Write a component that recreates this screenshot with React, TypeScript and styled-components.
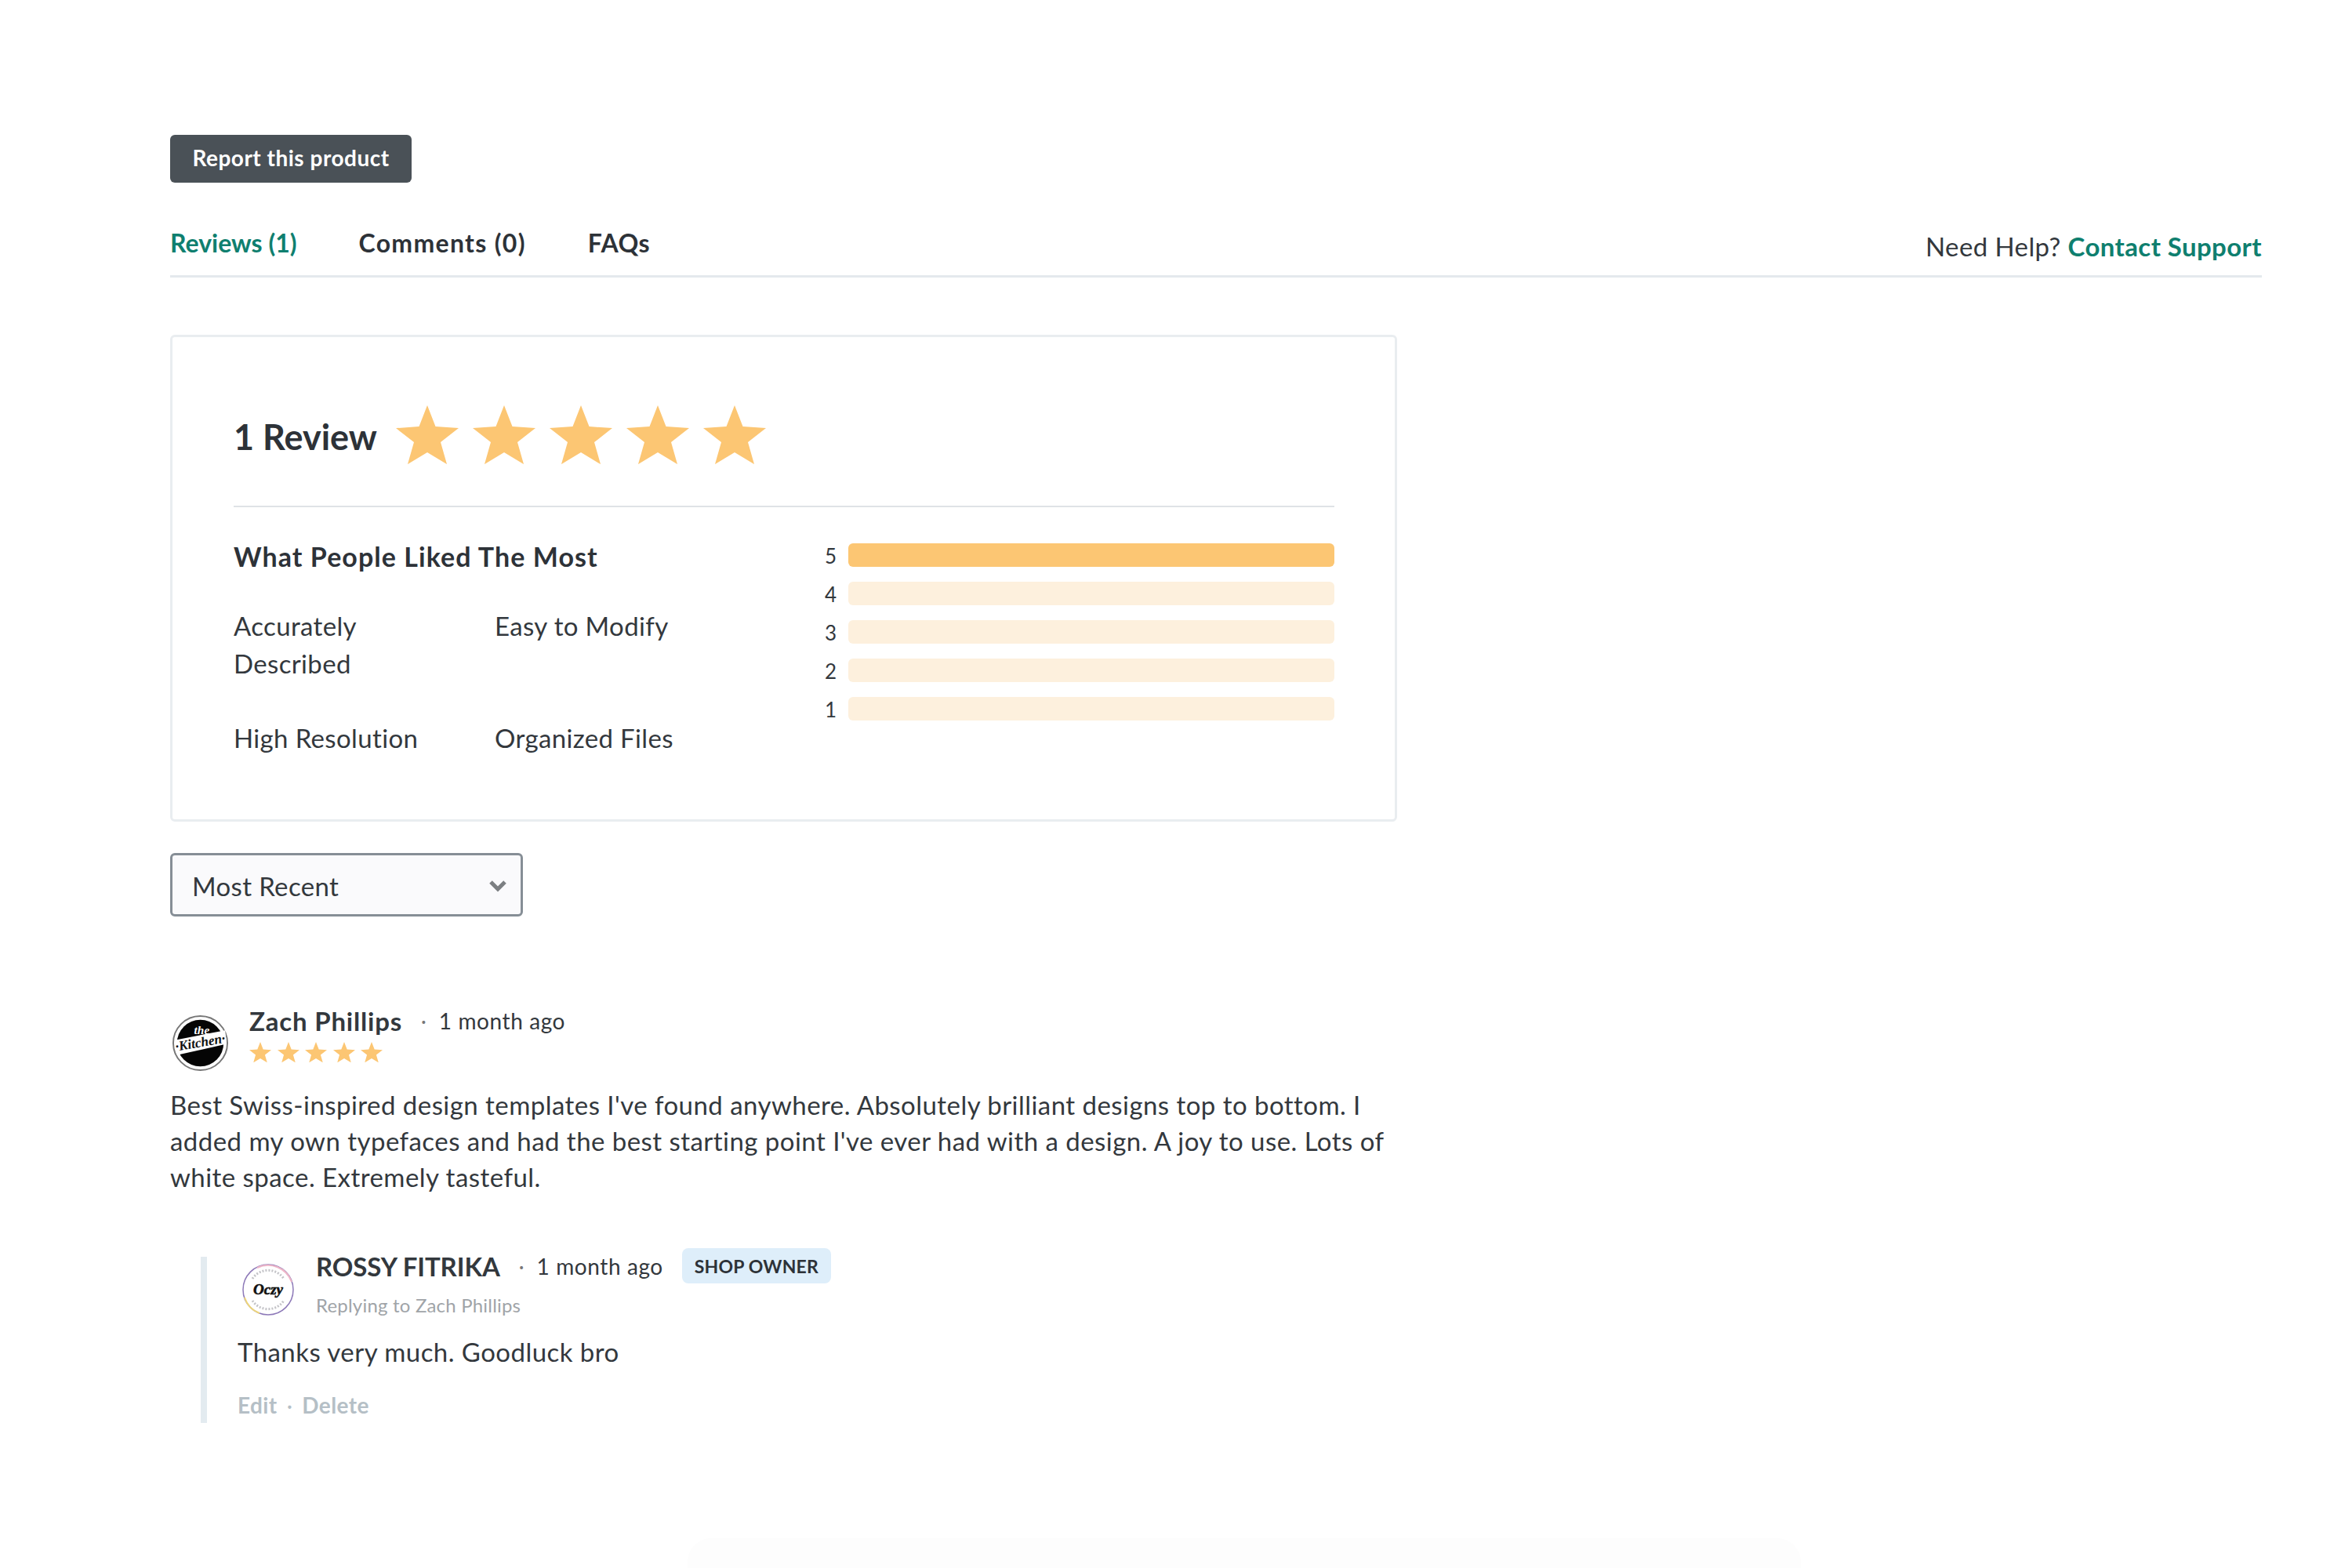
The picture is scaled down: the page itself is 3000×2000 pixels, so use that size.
import React from 'react';
import styled, { createGlobalStyle } from 'styled-components';

const GlobalStyle = createGlobalStyle`
  html, body {
    margin: 0;
    background: #fff;
    height: 2000px;
    overflow: hidden;
  }

  * {
    box-sizing: border-box;
  }

  body {
    font-family: Lato, "Noto Sans", sans-serif;
    color: #33383d;
  }
`;

const Page = styled.div`
  width: 3000px;
  height: 2000px;
  padding: 172px 115px 0 217px;
  overflow: hidden;
`;

const ReportButton = styled.button`
  display: block;
  width: 308px;
  height: 61px;
  padding: 0 0 3px;
  border: 0;
  border-radius: 6px;
  background: #4a5157;
  color: #fff;
  font: 700 28px Lato, sans-serif;
  letter-spacing: 0.5px;
`;

const TabBar = styled.div`
  height: 121px;
  padding-top: 55px;
  border-bottom: 3px solid #e4e9ed;
  display: flex;
  justify-content: space-between;
`;

const Tabs = styled.div`
  display: flex;
  gap: 79px;
`;

const Tab = styled.span<{ $active?: boolean; $tracking?: number }>`
  font-size: 32px;
  line-height: 44px;
  font-weight: 700;
  letter-spacing: ${(p) => p.$tracking ?? 0}px;
  color: ${(p) => (p.$active ? '#0f7f6f' : '#2d3238')};
`;

const Help = styled.div`
  font-size: 33px;
  line-height: 44px;
  padding-top: 4px;
  letter-spacing: 0.4px;
`;

const HelpLink = styled.a`
  color: #0f7f6f;
  font-weight: 700;
`;

const SummaryCard = styled.section`
  width: 1565px;
  height: 621px;
  margin-top: 73px;
  padding: 0 77px 0 78px;
  border: 3px solid #e9edf0;
  border-radius: 6px;
`;

const SummaryHead = styled.div`
  height: 217px;
  border-bottom: 2px solid #dfe3e6;
  padding-top: 87px;
  display: flex;
  gap: 24px;
`;

const ReviewCount = styled.h2`
  margin: 12px 0 0;
  font-size: 45px;
  line-height: 56px;
  font-weight: 700;
  color: #2d3238;
`;

const StarRow = styled.div<{ $gap: number }>`
  display: flex;
  gap: ${(p) => p.$gap}px;
`;

const StarIcon = styled.svg<{ $size: number }>`
  display: block;
  width: ${(p) => p.$size}px;
  height: ${(p) => p.$size * 0.94}px;
  fill: #fcc673;
`;

const SummaryBody = styled.div`
  display: flex;
  justify-content: space-between;
`;

const Liked = styled.div`
  padding-top: 40px;
`;

const LikedTitle = styled.h3`
  margin: 0;
  font-size: 34px;
  line-height: 46px;
  font-weight: 700;
  letter-spacing: 1.05px;
  color: #2d3238;
`;

const LikedGrid = styled.div`
  display: grid;
  grid-template-columns: 333px 300px;
  row-gap: 47px;
  margin-top: 41px;
`;

const LikedItem = styled.div`
  font-size: 33px;
  line-height: 48px;
  letter-spacing: 0.35px;
  white-space: pre;
`;

const Bars = styled.div`
  width: 650px;
  padding-top: 46px;
  display: flex;
  flex-direction: column;
  gap: 19px;
`;

const BarRow = styled.div`
  display: flex;
  align-items: center;
  gap: 16px;
  height: 30px;
`;

const BarLabel = styled.span`
  width: 14px;
  font-size: 26px;
  line-height: 30px;
  padding-top: 2px;
`;

const BarTrack = styled.div<{ $filled?: boolean }>`
  flex: 1;
  height: 30px;
  border-radius: 6px;
  background: ${(p) => (p.$filled ? '#fcc673' : '#fdf0dd')};
`;

const SortSelect = styled.div`
  width: 450px;
  height: 81px;
  margin-top: 40px;
  padding: 2px 18px 0 25px;
  display: flex;
  align-items: center;
  justify-content: space-between;
  background: #fafafc;
  border: 3px solid #868e96;
  border-radius: 6px;
  font-size: 33px;
  letter-spacing: 0.35px;
`;

const Chevron = styled.svg`
  width: 22px;
  height: 16px;
  fill: none;
  stroke: #7c7f82;
  stroke-width: 5;
`;

const Review = styled.article`
  width: 1570px;
  margin-top: 126px;
`;

const ReviewHead = styled.div`
  display: flex;
  gap: 27px;
  padding-left: 3px;
`;

const Avatar = styled.svg<{ $size: number }>`
  display: block;
  flex: none;
  width: ${(p) => p.$size}px;
  height: ${(p) => p.$size}px;
`;

const AuthorLine = styled.div`
  display: flex;
  align-items: center;
  height: 40px;
  margin-top: -13px;
`;

const AuthorName = styled.span`
  font-size: 33px;
  font-weight: 700;
  letter-spacing: 0.8px;
  color: #33383d;
`;

const ReplyName = styled(AuthorName)`
  letter-spacing: -0.1px;
`;

const MetaDot = styled.span`
  margin: 0 16px 0 24px;
  font-size: 26px;
  color: #777;
`;

const TimeAgo = styled.span`
  font-size: 28px;
  letter-spacing: 0.6px;
`;

const SmallStars = styled.div`
  margin-top: 7px;
`;

const ReviewText = styled.p`
  margin: 20px 0 0;
  font-size: 33px;
  line-height: 46px;
  letter-spacing: 0.45px;
`;

const Reply = styled.div`
  height: 212px;
  margin: 79px 0 0 39px;
  padding-left: 39px;
  border-left: 8px solid #e3ebf0;
`;

const ReplyHead = styled.div`
  display: flex;
  gap: 27px;
  padding: 8px 0 0 5px;
`;

const ReplyLine = styled.div`
  display: flex;
  align-items: center;
  height: 45px;
  margin-top: -19px;
`;

const ShopBadge = styled.span`
  margin-left: 24px;
  width: 190px;
  height: 45px;
  border-radius: 8px;
  background: #deeefa;
  display: flex;
  align-items: center;
  justify-content: center;
  font-size: 23px;
  font-weight: 700;
  letter-spacing: 0.2px;
  color: #2d3238;
`;

const ReplyingTo = styled.div`
  margin-top: 13px;
  font-size: 24px;
  line-height: 30px;
  letter-spacing: 0.2px;
  color: #a0a4a8;
`;

const ReplyText = styled.p`
  margin: 22px 0 0;
  font-size: 33px;
  line-height: 44px;
  letter-spacing: 0.45px;
`;

const ReplyActions = styled.div`
  margin-top: 28px;
  display: flex;
  align-items: center;
  font-size: 28px;
  line-height: 36px;
  font-weight: 700;
  letter-spacing: 0.4px;
  color: #b5bfc6;
`;

const ActionDot = styled.span`
  margin: 0 12px;
  font-weight: 400;
`;

// barely visible panel cut off by the bottom edge of the page
const FooterShade = styled.div`
  width: 1420px;
  height: 60px;
  margin: 147px 0 0 660px;
  background: #fdfdfd;
  border-radius: 30px 30px 0 0;
`;

const Star: React.FC<{ size: number }> = ({ size }) => (
  <StarIcon $size={size} viewBox="0 0 80 75">
    <polygon points="40,0 50.5,27 80,29 57,47 65,75 40,60 15,75 23,47 0,29 29.5,27" />
  </StarIcon>
);

const Stars: React.FC<{ size: number; gap: number }> = ({ size, gap }) => (
  <StarRow $gap={gap}>
    {[0, 1, 2, 3, 4].map((i) => (
      <Star key={i} size={size} />
    ))}
  </StarRow>
);

const KitchenLogo: React.FC = () => (
  <Avatar $size={71} viewBox="0 0 74 74">
    <circle cx="37" cy="37" r="36" fill="#fff" stroke="#777" strokeWidth="2" />
    <circle cx="37" cy="37" r="31" fill="#050505" />
    <polygon points="3,33 70,20 72,38 6,53" fill="#fff" />
    <text x="39" y="25" textAnchor="middle" fontSize="16" fontStyle="italic" fontWeight="700" fill="#fff" fontFamily="Liberation Serif, serif">
      the
    </text>
    <text
      x="37"
      y="42"
      textAnchor="middle"
      fontSize="18"
      fontStyle="italic"
      fontWeight="700"
      fill="#111"
      fontFamily="Liberation Serif, serif"
      transform="rotate(-10 37 37)"
    >
      ·Kitchen·
    </text>
  </Avatar>
);

const RossyLogo: React.FC = () => (
  <Avatar $size={68} viewBox="0 0 68 68">
    <circle cx="34" cy="34" r="32" fill="#fff" stroke="#8d79b8" strokeWidth="1.5" />
    <path d="M20 6 A32 32 0 0 1 64 24" fill="none" stroke="#eeb6c8" strokeWidth="2" />
    <path d="M4 44 A32 32 0 0 0 23 64" fill="none" stroke="#f0d878" strokeWidth="2" />
    <path d="M14 20 A24 24 0 0 1 54 20" fill="none" stroke="#c4c4c8" strokeWidth="3" strokeDasharray="2 2" />
    <path d="M14 48 A24 24 0 0 0 54 48" fill="none" stroke="#c4c4c8" strokeWidth="3" strokeDasharray="2 2" />
    <text x="34" y="40" textAnchor="middle" fontSize="19" fontStyle="italic" fontWeight="700" fill="#111" stroke="#111" strokeWidth="0.6" fontFamily="Liberation Serif, serif">
      Oczy
    </text>
  </Avatar>
);

const RATINGS = [5, 4, 3, 2, 1];

const App: React.FC = () => (
  <Page>
    <GlobalStyle />
    <ReportButton>Report this product</ReportButton>

    <TabBar>
      <Tabs>
        <Tab $active>Reviews (1)</Tab>
        <Tab $tracking={1.3}>Comments (0)</Tab>
        <Tab $tracking={0.5}>FAQs</Tab>
      </Tabs>
      <Help>
        Need Help? <HelpLink>Contact Support</HelpLink>
      </Help>
    </TabBar>

    <SummaryCard>
      <SummaryHead>
        <ReviewCount>1 Review</ReviewCount>
        <Stars size={80} gap={18} />
      </SummaryHead>
      <SummaryBody>
        <Liked>
          <LikedTitle>What People Liked The Most</LikedTitle>
          <LikedGrid>
            <LikedItem>{'Accurately\nDescribed'}</LikedItem>
            <LikedItem>Easy to Modify</LikedItem>
            <LikedItem>High Resolution</LikedItem>
            <LikedItem>Organized Files</LikedItem>
          </LikedGrid>
        </Liked>
        <Bars>
          {RATINGS.map((rating) => (
            <BarRow key={rating}>
              <BarLabel>{rating}</BarLabel>
              <BarTrack $filled={rating === 5} />
            </BarRow>
          ))}
        </Bars>
      </SummaryBody>
    </SummaryCard>

    <SortSelect>
      Most Recent
      <Chevron viewBox="0 0 22 16">
        <path d="M2 3l9 9 9-9" />
      </Chevron>
    </SortSelect>

    <Review>
      <ReviewHead>
        <KitchenLogo />
        <div>
          <AuthorLine>
            <AuthorName>Zach Phillips</AuthorName>
            <MetaDot>·</MetaDot>
            <TimeAgo>1 month ago</TimeAgo>
          </AuthorLine>
          <SmallStars>
            <Stars size={28} gap={7.5} />
          </SmallStars>
        </div>
      </ReviewHead>
      <ReviewText>
        Best Swiss-inspired design templates I've found anywhere. Absolutely brilliant designs top to bottom. I
        <br />
        added my own typefaces and had the best starting point I've ever had with a design. A joy to use. Lots of
        <br />
        white space. Extremely tasteful.
      </ReviewText>

      <Reply>
        <ReplyHead>
          <RossyLogo />
          <div>
            <ReplyLine>
              <ReplyName>ROSSY FITRIKA</ReplyName>
              <MetaDot>·</MetaDot>
              <TimeAgo>1 month ago</TimeAgo>
              <ShopBadge>SHOP OWNER</ShopBadge>
            </ReplyLine>
            <ReplyingTo>Replying to Zach Phillips</ReplyingTo>
          </div>
        </ReplyHead>
        <ReplyText>Thanks very much. Goodluck bro</ReplyText>
        <ReplyActions>
          Edit
          <ActionDot>·</ActionDot>
          Delete
        </ReplyActions>
      </Reply>
    </Review>

    <FooterShade />
  </Page>
);

export default App;
